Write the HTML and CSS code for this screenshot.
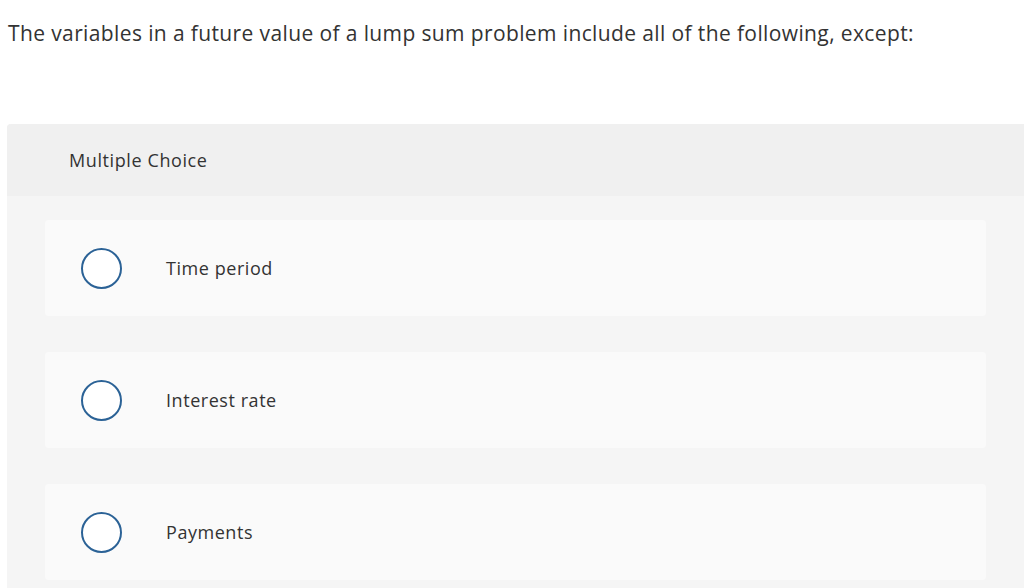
FILE: index.html
```html
<!DOCTYPE html>
<html>
<head>
<meta charset="utf-8">
<link rel="stylesheet" href="styles.css">
</head>
<body>
<p class="question">The variables in a future value of a lump sum problem include all of the following, except:</p>
<div class="panel">
  <div class="panel-header">Multiple Choice</div>
  <div class="panel-body">
    <div class="option"><span class="radio"></span><span class="label">Time period</span></div>
    <div class="option"><span class="radio"></span><span class="label">Interest rate</span></div>
    <div class="option"><span class="radio"></span><span class="label">Payments</span></div>
  </div>
</div>
</body>
</html>
```
FILE: styles.css
```css
html, body {
  margin: 0;
  padding: 0;
  background: #ffffff;
  font-family: "Open Sans", "Liberation Sans", sans-serif;
  color: #333333;
}
.question {
  margin: 0;
  padding: 19px 0 0 8px;
  font-size: 21px;
  letter-spacing: 0.38px;
  line-height: 28px;
  height: 124px;
  box-sizing: border-box;
}
.panel {
  margin-left: 7px;
  background: #f5f5f5;
  border-top-left-radius: 4px;
  overflow: hidden;
}
.panel-header {
  background: #f0f0f0;
  height: 72px;
  display: flex;
  align-items: center;
  padding-left: 62px;
  font-size: 18px;
  letter-spacing: 0.6px;
}
.panel-body {
  padding: 24px 38px 10px 38px;
  display: flex;
  flex-direction: column;
  gap: 36px;
}
.option {
  background: #fafafa;
  border-radius: 4px;
  height: 96px;
  display: flex;
  align-items: center;
  padding-left: 36px;
}
.radio {
  width: 41px;
  height: 41px;
  box-sizing: border-box;
  border: 2px solid #2b6296;
  border-radius: 50%;
  background: #ffffff;
  flex: none;
}
.label {
  margin-left: 44px;
  font-size: 18px;
  letter-spacing: 0.55px;
}
```
